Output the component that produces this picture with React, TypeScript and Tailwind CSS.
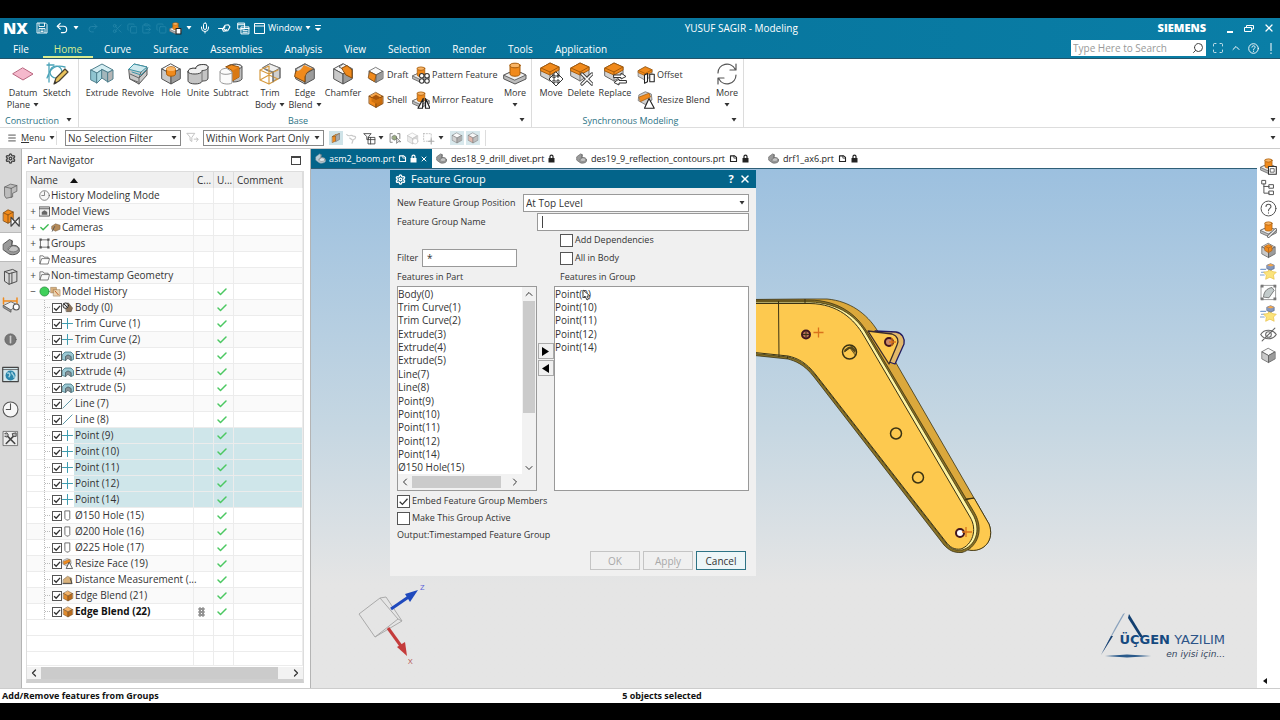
import type { ReactNode } from "react";
import { Mic, Maximize, ChevronUp, ChevronDown, ChevronLeft, ChevronRight, Undo2, Redo2, Scissors, Copy, ClipboardPaste, Search, Settings, Check, Menu as MenuIcon, X } from "lucide-react";

const OR = "#f08a1c";
const GREY = ["#fafafa", "#c9c9c9", "#9b9b9b"];
const ORANGE = ["#f7a548", "#f08a1c", "#c96c0c"];

function Svg({ size = 24, children }: { size?: number; children: ReactNode }) {
  return (
    <svg width={size} height={size} viewBox="0 0 24 24" fill="none" strokeLinejoin="round" strokeLinecap="round" className="shrink-0" aria-hidden="true">
      {children}
    </svg>
  );
}

function Cube({ c = GREY, size = 24, children, stroke = "#555" }: { c?: string[]; size?: number; children?: ReactNode; stroke?: string }) {
  return (
    <Svg size={size}>
      <g stroke={stroke} strokeWidth="1">
        <path d="M12 2 21 7 12 12 3 7Z" fill={c[0]} />
        <path d="M3 7 12 12V22L3 17Z" fill={c[1]} />
        <path d="M21 7 12 12V22L21 17Z" fill={c[2]} />
      </g>
      {children}
    </Svg>
  );
}

function Caret({ className = "" }: { className?: string }) {
  return (
    <svg width="6" height="4" viewBox="0 0 6 4" className={`shrink-0 ${className}`} aria-hidden="true">
      <path d="M.5 0H5.500L3 3.500Z" fill="currentColor" />
    </svg>
  );
}

/* ---------- Ribbon icons ---------- */
const DatumIcon = () => (
  <Svg>
    <path d="M12 6 22 12 12 18 2 12Z" fill="#f5b8cc" stroke="#b9667f" strokeWidth="1" />
  </Svg>
);
const SketchIcon = () => (
  <Svg>
    <path d="M2 3H9M4 1V20M2 16C6 4 12 3 20 5" stroke="#4aa3b8" strokeWidth="1.3" />
    <circle cx="11" cy="10" r="6" stroke="#4aa3b8" strokeWidth="1.2" />
    <path d="M9 22 11 16 20 7 23 10 14 19Z" fill="#e9c35c" stroke="#4b4232" strokeWidth="1.2" />
    <path d="M9 22 10 19 12 21Z" fill="#333" />
  </Svg>
);
const ExtrudeIcon = () => (
  <Svg>
    <g stroke="#4f7f8d" strokeWidth="1">
      <path d="M1 8 12 2 23 8 18 10.500 12 7.500 7 11Z" fill="#d5eef3" />
      <path d="M1 8 7 11V21L1 18Z" fill="#8fc4d0" />
      <path d="M7 11 12 7.500V16L7 21Z" fill="#a9d7e0" />
      <path d="M12 7.500 18 10.500V20L12 16Z" fill="#a3b6bb" />
      <path d="M18 10.500 23 8V17L18 20Z" fill="#b5b5b5" />
    </g>
  </Svg>
);
const ExtrudeSmall = () => (
  <Svg size={12}>
    <path d="M1 9 6 4H18L23 9V19L18 21V13L12 10 7 13V21L1 19Z" fill="#9cc9d4" stroke="#3f7482" strokeWidth="1.600" />
    <path d="M7 21V13L12 10 18 13V21L12 17Z" fill="#8b9599" stroke="#4c5f66" strokeWidth="1.400" />
  </Svg>
);
const RevolveIcon = () => (
  <Svg>
    <path d="M3 7 8 2 21 5 21 13 13 22 4 17Z" fill="#c9c9c9" stroke="#555" />
    <path d="M3 7 8 2 21 5 15 10Z" fill="#cfe9ee" stroke="#3b95a9" />
    <path d="M4 12 13 16 21 8M15 10 13 16V22M4 17 12 20" stroke="#666" />
    <path d="M6 10 15 13 22 6" stroke="#3b95a9" />
  </Svg>
);
const HoleIcon = () => (
  <Cube>
    <path d="M7.500 7C7.500 4 16.500 4 16.500 7V12C16.500 15 7.500 15 7.500 12Z" fill={OR} stroke="#a85c0a" />
    <ellipse cx="12" cy="7" rx="4.500" ry="2" fill="#f9b566" />
  </Cube>
);
const UniteIcon = () => (
  <Svg>
    <path d="M2 10C2 6 7 6 10 6.500C9 2 22 1 22 5V16C22 19 18 19 16 19C16 23 2 23 2 19Z" fill="#c4c4c4" stroke="#444" />
    <path d="M2 10C2 6 7 6 10 6.500C9 2 22 1 22 5C22 8 18 8.500 16 8.500C17 13 2 13 2 10Z" fill="#f0f0f0" stroke="#444" />
    <path d="M16 9V19" stroke="#777" />
  </Svg>
);
const SubtractIcon = () => (
  <Svg>
    <path d="M9 4C13 1 23 2 23 5V17C22 19 18 20 14 20V9Z" fill="#bdbdbd" stroke="#555" />
    <path d="M9 4C13 1 23 2 23 5L20 7 9 5Z" fill="#efefef" stroke="#555" />
    <path d="M7 5 13 8.500V19L20 15V5L13 3Z" fill={OR} stroke="#9c5509" />
    <path d="M13 9 20 5V15L13 19Z" fill="#d97914" />
    <path d="M1 10C1 7 6 6 8 6.500L13 10V21C10 23 1 22 1 19Z" fill="#fbfbfb" stroke="#999" />
    <path d="M1 10C1 13 10 13 13 11" stroke="#999" />
  </Svg>
);
const TrimIcon = () => (
  <Svg>
    <path d="M12 2 22 6V16L15 19V11L8 8 5 6Z" fill="#cfcfcf" stroke="#777" />
    <path d="M12 2 22 6 15 10 5 6Z" fill="#efefef" stroke="#777" />
    <path d="M2 8 11 12V22L2 18ZM2 8 11 4M11 12 20 8M11 22 20 17M2 18 11 13 20 17M11 13V4" stroke="#d69a3e" strokeWidth="1.200" />
    <path d="M15 10V20M22 6V16" stroke="#666" />
  </Svg>
);
const EdgeBlendIcon = () => (
  <Cube>
    <path d="M2 12C3 6 8 8 12 2L21 6.500C17 8 13 10 12 15V20L2 15Z" fill={OR} stroke="#7b470d" />
    <path d="M3 7 12 2 21 6.500C17 7 13 9 12 13L4 9Z" fill="#dcdcdc" stroke="#666" />
    <path d="M4 9C7 9 9 6 11 3L20 7C16 8 13 10 12 14L3 11Z" fill={OR} />
  </Cube>
);
const ChamferIcon = () => (
  <Cube>
    <path d="M12 2 8 5 16 9 21 16V7Z" fill="#f4f4f4" stroke="#666" />
    <path d="M11 6 16 3.500 21 8V16L15 13Z" fill={OR} stroke="#8c4c08" />
  </Cube>
);
const DraftIcon = () => (
  <Cube size={18}>
    <path d="M4 8 12 12 10 21 2 16Z" fill={OR} stroke="#8c4c08" />
  </Cube>
);
const ShellIcon = () => (
  <Cube size={18} c={ORANGE} stroke="#7c430a">
    <path d="M12 5 18 8.500 12 12 6 8.500Z" fill="#a9550a" />
    <path d="M6 9 12 12 18 9V14L12 17 6 14Z" fill="#d0720f" />
  </Cube>
);
const Pad = ({ size = 18, children }: { size?: number; children?: ReactNode }) => (
  <Svg size={size}>
    <path d="M1 13 12 8 23 13V17L12 22 1 17Z" fill="#bcbcbc" stroke="#555" />
    <path d="M1 13 12 8 23 13 12 18Z" fill="#efefef" stroke="#666" />
    <path d="M7 3V12C7 15 17 15 17 12V3Z" fill={OR} stroke="#a85c0a" />
    <ellipse cx="12" cy="3.500" rx="5" ry="2.300" fill="#f9b566" stroke="#a85c0a" />
    {children}
  </Svg>
);
const PatternIcon = () => (
  <Pad>
    <g fill="#fff" stroke="#333" strokeWidth="1.400">
      <circle cx="13" cy="13" r="3" /><circle cx="20" cy="13" r="3" /><circle cx="13" cy="20" r="3" /><circle cx="20" cy="20" r="3" />
    </g>
  </Pad>
);
const MirrorIcon = () => (
  <Pad>
    <path d="M15 10 14 23H8ZM18 10 24 23H18Z" fill="#fff" stroke="#222" strokeWidth="1.600" />
  </Pad>
);
const SyncCube = ({ size = 24, children }: { size?: number; children: ReactNode }) => (
  <Svg size={size}>
    <path d="M2 6 11 1 20 5V13L11 19 2 14Z" fill="#d2d2d2" stroke="#666" />
    <path d="M2 6 11 1 20 5V8L11 13 2 9Z" fill={OR} stroke="#a85c0a" />
    <path d="M2 6 11 10 20 5M11 10V13" stroke="#a85c0a" />
    <path d="M11 13V19" stroke="#777" />
    {children}
  </Svg>
);
const MoveIcon = () => (
  <SyncCube>
    <path d="M17 10 20 13H18V15H20V13L24 17 20 21V18H18V21H20L17 24 14 21H16V18H14V21L10 17 14 13V16H16V13H14Z" fill="#fff" stroke="#222" strokeWidth="0.900" />
  </SyncCube>
);
const DeleteIcon = () => (
  <SyncCube>
    <path d="M13 12 23 22M23 12 13 22" stroke="#333" strokeWidth="3.200" />
    <path d="M13 12 23 22M23 12 13 22" stroke="#fff" strokeWidth="1.600" />
  </SyncCube>
);
const ReplaceIcon = () => (
  <SyncCube>
    <path d="M11 13H18V11L23 14.500 18 17V15.500H11ZM23 18.500H16V17L11 20.500 16 23V21H23Z" fill="#fff" stroke="#333" />
  </SyncCube>
);
const OffsetIcon = () => (
  <SyncCube size={18}>
    <path d="M10 12 14 10V21L10 23ZM17 11H23V21H17Z" fill="#fff" stroke="#222" strokeWidth="1.400" />
  </SyncCube>
);
const ResizeIcon = ({ size = 18 }: { size?: number }) => (
  <Svg size={size}>
    <path d="M3 5 11 1 19 4 20 12 11 18 2 13Z" fill="#cfcfcf" stroke="#666" />
    <path d="M3 8 16 3 18 8 5 14Z" fill={OR} stroke="#a85c0a" />
    <path d="M16 10 23 23H10Z" fill="#fff" stroke="#222" strokeWidth="1.500" />
  </Svg>
);
const CycleIcon = () => (
  <Svg>
    <path d="M3 11A9 9 0 0 1 20 7M21 2V8H15M21 13A9 9 0 0 1 4 17M3 22V16H9" stroke="#555" strokeWidth="1.200" />
  </Svg>
);

/* ---------- Small icons ---------- */
const PartIcon = ({ size = 13, light = false }: { size?: number; light?: boolean }) => (
  <Svg size={size}>
    <path d="M2 8 10 2 14 4 13 10C19 9 23 12 23 15V18C20 23 12 23 9 21L2 16Z" fill={light ? "#b9cdd7" : "#9a9a9a"} stroke={light ? "#7f97a3" : "#555"} strokeWidth="1.300" />
    <ellipse cx="15" cy="14.500" rx="7" ry="4" fill={light ? "#dfe9ee" : "#c4c4c4"} stroke="#666" />
    <path d="M9 15 13 10V3" stroke="#555" />
  </Svg>
);
const StarIcon = () => (
  <Svg size={17}>
    <path d="M1 9H8M2 13H7M0 17H6" stroke="#7da0d0" strokeWidth="1.500" />
    <path d="M14 6 17 12 23 13 19 17 20 23 14 20 8 23 9 17 5 13 11 12Z" fill="#fbe37a" stroke="#e8c14a" />
    <path d="M10 3 15 1 20 3V8L15 10 10 8Z" fill="#8497bd" stroke="#56678c" />
    <path d="M10 3 15 1 20 3 15 5Z" fill="#f3a54a" />
  </Svg>
);
const ClockIcon = ({ size = 12 }: { size?: number }) => (
  <Svg size={size}>
    <circle cx="12" cy="12" r="10.500" stroke="#555" strokeWidth="1.500" fill="#f7f7f7" />
    <path d="M12 4V12H6" stroke="#555" strokeWidth="1.500" />
  </Svg>
);
const PageIcon = () => (
  <Svg size={9}>
    <path d="M4 5H15L20 9V20H4Z" stroke="currentColor" strokeWidth="3" />
    <path d="M13 5V11H20" stroke="currentColor" strokeWidth="2" />
  </Svg>
);
const LockIcon = () => (
  <svg width="7" height="9" viewBox="0 0 7 9" className="shrink-0" aria-hidden="true">
    <path d="M2 4V2.500C2 .7 5 .7 5 2.500V4" fill="none" stroke="currentColor" strokeWidth="1.200" />
    <path d="M.5 4H6.500V8.500H.5Z" fill="currentColor" />
  </svg>
);

/* ---------- Ribbon ---------- */
function BigButton({ icon, label, second, width, caret }: { icon: ReactNode; label: string; second?: string; width: string; caret?: boolean }) {
  return (
    <button className={`flex ${width} shrink-0 flex-col items-center text-[9px] leading-3 whitespace-nowrap`}>
      <span className="mb-px flex h-6 items-center">{icon}</span>
      <span>{label}</span>
      {(second || caret) && (
        <span className="flex h-3 items-center gap-[3px]">
          {second}
          <Caret />
        </span>
      )}
    </button>
  );
}
function SmallButton({ icon, label }: { icon: ReactNode; label: string }) {
  return (
    <button className="flex h-[25px] items-center gap-[2px] text-[9px] leading-3 whitespace-nowrap">
      {icon}
      {label}
    </button>
  );
}
function Group({ title, children }: { title: string; children: ReactNode }) {
  return (
    <section className="relative flex shrink-0 flex-col border-r border-[#dcdcdc] pt-[3px]">
      <div className="flex h-[53px] items-start">{children}</div>
      <h2 className="pr-[14px] text-center text-[9px] leading-3 text-[#2d7385]">{title}</h2>
      <Caret className="absolute right-[6px] bottom-[5px]" />
    </section>
  );
}

/* ---------- Tree ---------- */
type Row = { label: string; icon: ReactNode; top?: boolean; sign?: string; tick?: boolean; sel?: boolean; bold?: boolean };
const plus = (
  <Svg size={11}>
    <path d="M12 1V23M1 12H23" stroke="#3f9db0" strokeWidth="2.200" />
  </Svg>
);
const lineIcon = (
  <Svg size={11}>
    <path d="M2 22 22 2" stroke="#4f8d9c" strokeWidth="2" />
  </Svg>
);
const holeIcon = (
  <Svg size={11}>
    <path d="M7 2H17V19L14 22H10L7 19Z" stroke="#555" strokeWidth="1.800" fill="#fff" />
  </Svg>
);
const folder = (
  <Svg size={11}>
    <path d="M2 21V4H9L11 7H20V10M2 21 6 10H23L20 21Z" stroke="#555" strokeWidth="1.600" />
  </Svg>
);
const blendSmall = <Cube size={12} c={["#f3b36a", "#e08b2e", "#b96b1c"]} stroke="#6b4a26" />;
const rows: Row[] = [
  { label: "History Modeling Mode", top: true, icon: <ClockIcon size={11} /> },
  {
    label: "Model Views", top: true, sign: "+",
    icon: <Svg size={11}><path d="M1 2H23V22H1ZM1 6H23" stroke="#444" strokeWidth="1.800" fill="#eee" /><path d="M6 19V13L12 9 18 13V19Z" fill="#666" /></Svg>,
  },
  {
    label: "Cameras", top: true, sign: "+",
    icon: <><Check size={11} strokeWidth={3} className="text-[#3cbb50]" aria-hidden="true" /><Svg size={11}><path d="M4 9 12 4 22 7V16L12 20 4 16Z" fill="#b58a58" stroke="#69553d" /><path d="M5 20 10 10" stroke="#555" strokeWidth="2" /></Svg></>,
  },
  {
    label: "Groups", top: true, sign: "+",
    icon: <Svg size={11}><path d="M4 4H20V20H4Z" stroke="#444" strokeWidth="1.600" /><path d="M1 1H6V6H1ZM18 1H23V6H18ZM1 18H6V23H1ZM18 18H23V23H18Z" fill="#555" /></Svg>,
  },
  { label: "Measures", top: true, sign: "+", icon: folder },
  { label: "Non-timestamp Geometry", top: true, sign: "+", icon: folder },
  {
    label: "Model History", top: true, sign: "−", tick: true,
    icon: <><Svg size={11}><circle cx="12" cy="12" r="10" fill="#3fd05a" stroke="#28833a" strokeWidth="1.500" /></Svg><Svg size={11}><path d="M2 3H14V15H2Z" fill="#d8b07c" stroke="#85643c" /><path d="M8 8H22V22H8Z" fill="#ead3ae" stroke="#85643c" /><path d="M11 11 18 19" stroke="#c05a20" strokeWidth="2" /></Svg></>,
  },
  { label: "Body (0)", tick: true, icon: <Svg size={11}><path d="M6 4 14 2 23 13 20 21 10 21Z" fill="#8d745b" stroke="#3c342b" /><circle cx="8" cy="8" r="6" stroke="#222" strokeWidth="2" fill="#ddd" /><path d="M4 4 12 12" stroke="#222" strokeWidth="2" /></Svg> },
  { label: "Trim Curve (1)", tick: true, icon: plus },
  { label: "Trim Curve (2)", tick: true, icon: plus },
  { label: "Extrude (3)", tick: true, icon: <ExtrudeSmall /> },
  { label: "Extrude (4)", tick: true, icon: <ExtrudeSmall /> },
  { label: "Extrude (5)", tick: true, icon: <ExtrudeSmall /> },
  { label: "Line (7)", tick: true, icon: lineIcon },
  { label: "Line (8)", tick: true, icon: lineIcon },
  { label: "Point (9)", tick: true, sel: true, icon: plus },
  { label: "Point (10)", tick: true, sel: true, icon: plus },
  { label: "Point (11)", tick: true, sel: true, icon: plus },
  { label: "Point (12)", tick: true, sel: true, icon: plus },
  { label: "Point (14)", tick: true, sel: true, icon: plus },
  { label: "Ø150 Hole (15)", tick: true, icon: holeIcon },
  { label: "Ø200 Hole (16)", tick: true, icon: holeIcon },
  { label: "Ø225 Hole (17)", tick: true, icon: holeIcon },
  { label: "Resize Face (19)", tick: true, icon: <ResizeIcon size={11} /> },
  { label: "Distance Measurement (...", tick: true, icon: <Svg size={11}><path d="M3 12 12 5 21 9V20H3Z" fill="#d9b27c" stroke="#66513a" /><path d="M2 21H22L18 10" stroke="#333" strokeWidth="1.800" /></Svg> },
  { label: "Edge Blend (21)", tick: true, icon: blendSmall },
  { label: "Edge Blend (22)", tick: true, bold: true, icon: blendSmall },
];

function CheckBox({ id, checked = false, small = false, label }: { id: string; checked?: boolean; small?: boolean; label?: string }) {
  return (
    <span className={`grid shrink-0 ${small ? "size-[10px]" : "size-[13px]"}`}>
      <input id={id} type="checkbox" defaultChecked={checked} aria-label={label} className="peer size-full appearance-none border border-[#555] bg-white [grid-area:1/1]" />
      <svg viewBox="0 0 12 12" className="pointer-events-none invisible size-full [grid-area:1/1] peer-checked:visible" aria-hidden="true">
        <path d="M2.500 6.200 5 8.700 9.700 3.500" fill="none" stroke="#333" strokeWidth={small ? 1.600 : 1.200} />
      </svg>
    </span>
  );
}

function PartNavigator() {
  return (
    <aside className="flex w-[290px] shrink-0 flex-col border-x border-[#b4b4b4] bg-white pr-[6px] pb-[5px] pl-1">
      <div className="flex h-[22px] shrink-0 items-center justify-between pr-[3px] pl-px">
        <h2 className="text-[10px]">Part Navigator</h2>
        <button aria-label="Undock panel" className="h-[9px] w-[10px] border border-t-2 border-[#444]" />
      </div>
      <div className="flex flex-1 flex-col border border-b-4 border-[#ddd] border-b-[#cfcfcf]">
        <table className="w-full table-fixed border-separate border-spacing-0 text-[10px]">
          <colgroup>
            <col />
            <col className="w-5" />
            <col className="w-5" />
            <col className="w-[69px]" />
          </colgroup>
          <thead>
            <tr className="h-4 bg-[#f0f0f0] text-left leading-[15px] [&>th]:border-r [&>th]:border-[#ddd] [&>th]:p-0 [&>th]:pl-[3px] [&>th]:font-normal">
              <th>
                <span className="flex items-center gap-3">
                  Name
                  <svg width="8" height="5" viewBox="0 0 8 5" aria-hidden="true"><path d="M0 5 4 0 8 5Z" fill="#111" /></svg>
                </span>
              </th>
              <th>C...</th>
              <th>U...</th>
              <th>Comment</th>
            </tr>
          </thead>
          <tbody>
            {rows.map((r, i) => (
              <tr key={r.label} className={`h-4 leading-[15px] [&>td]:border-r [&>td]:border-b [&>td]:border-[#ececec] [&>td]:p-0 ${r.sel ? "[&>td+td]:bg-[#cfe6ea]" : i % 2 ? "bg-[#fafafa]" : ""}`}>
                <td>
                  <span className="flex items-center whitespace-nowrap">
                    {r.top ? (
                      <span className="flex w-3 shrink-0 justify-center text-[#444]">{r.sign}</span>
                    ) : (
                      <>
                        <span className="h-[15px] w-[18px] shrink-0 border-r border-dotted border-[#bbb]" />
                        <span className="mr-[2px] w-[5px] shrink-0 border-t border-dotted border-[#bbb]" />
                        <CheckBox small id={`row-${i}`} checked label={`Show ${r.label}`} />
                      </>
                    )}
                    <span className={`flex shrink-0 items-center ${r.top ? "" : "w-3"}`}>{r.icon}</span>
                    <span className={`h-[15px] flex-1 pl-px ${r.sel ? "bg-[#cfe6ea]" : ""} ${r.bold ? "font-bold text-[#111]" : ""}`}>{r.label}</span>
                  </span>
                </td>
                <td>
                  {r.bold && (
                    <svg width="7" height="10" viewBox="0 0 7 10" className="ml-1" aria-hidden="true">
                      <path d="M1 1H3V3H1ZM4 1H6V3H4ZM1 4H3V6H1ZM4 4H6V6H4ZM1 7H3V9H1ZM4 7H6V9H4Z" fill="none" stroke="#555" strokeWidth=".8" />
                    </svg>
                  )}
                </td>
                <td>{r.tick && <Check size={12} strokeWidth={3} className="ml-[2px] text-[#4cc862]" aria-label="Up to date" />}</td>
                <td />
              </tr>
            ))}
            {["h-4", "h-4", "h-[14px]"].map((h, n) => (
              <tr key={n} className={`${h} [&>td]:border-r [&>td]:border-b [&>td]:border-[#ececec] [&>td]:p-0`}>
                <td /><td /><td /><td />
              </tr>
            ))}
          </tbody>
        </table>
        <div className="mt-auto flex h-[12px] items-center justify-between bg-[#f2f2f2] px-[1px]">
          <ChevronLeft size={12} strokeWidth={2.500} aria-hidden="true" />
          <div className="mr-3 ml-px h-full flex-1 bg-[#cbcbcb]" />
          <ChevronRight size={12} strokeWidth={2.500} aria-hidden="true" />
        </div>
      </div>
    </aside>
  );
}

/* ---------- Dialog ---------- */
const inPart = ["Body(0)", "Trim Curve(1)", "Trim Curve(2)", "Extrude(3)", "Extrude(4)", "Extrude(5)", "Line(7)", "Line(8)", "Point(9)", "Point(10)", "Point(11)", "Point(12)", "Point(14)", "Ø150 Hole(15)"];
const inGroup = ["Point(9)", "Point(10)", "Point(11)", "Point(12)", "Point(14)"];
const listClass = "grid h-[187px] flex-1 grid-rows-[repeat(14,1fr)] items-center text-[10px] leading-3";

function FeatureGroupDialog() {
  return (
    <div role="dialog" aria-labelledby="dlg-title" className="absolute top-[1px] left-[79px] flex w-[366px] flex-col bg-[#f0f0f0] pb-[6px] text-[9px] leading-3 text-[#333]">
      <div className="flex h-[18px] shrink-0 items-center bg-[#03648a] pr-[5px] pl-[5px] text-white">
        <Settings size={11} strokeWidth={3} aria-hidden="true" />
        <h2 id="dlg-title" className="ml-[5px] flex-1 text-[11px]">Feature Group</h2>
        <button className="w-4 text-[11px] font-bold" aria-label="Help">?</button>
        <button aria-label="Close"><X size={12} strokeWidth={3} /></button>
      </div>
      <div className="flex flex-1 flex-col px-[7px] pt-[6px]">
        <div className="flex h-[18px] items-center justify-between">
          <label htmlFor="pos" className="whitespace-nowrap">New Feature Group Position</label>
          <span className="relative flex h-full w-[226px] shrink-0 items-center">
            <select id="pos" className="size-full appearance-none border border-[#999] bg-white pl-[2px] text-[10px]">
              <option>At Top Level</option>
            </select>
            <Caret className="absolute right-1" />
          </span>
        </div>
        <div className="mt-px flex h-[18px] items-center justify-between">
          <label htmlFor="gname">Feature Group Name</label>
          <span className="relative flex h-full w-[212px] items-center">
            <input id="gname" className="size-full border border-[#999] bg-white px-1 text-[10px]" />
            <span className="absolute left-[5px] h-3 w-px bg-[#444]" />
          </span>
        </div>
        <div className="mt-[2px] flex h-[14px] items-center gap-[2px] pl-[163px]">
          <CheckBox id="deps" />
          <label htmlFor="deps">Add Dependencies</label>
        </div>
        <div className="mt-[2px] flex h-[18px] items-center">
          <label htmlFor="filter" className="w-[25px]">Filter</label>
          <input id="filter" defaultValue="*" className="h-full w-[95px] border border-[#999] bg-white px-1 text-[10px]" />
          <span className="ml-[43px] flex items-center gap-[2px]">
            <CheckBox id="allbody" />
            <label htmlFor="allbody">All in Body</label>
          </span>
        </div>
        <div className="mt-[2px] mb-px flex h-4 items-center">
          <h3 className="w-[163px]">Features in Part</h3>
          <h3>Features in Group</h3>
        </div>
        <div className="flex h-[205px]">
          <div className="flex w-[140px] flex-col border border-[#999] bg-white">
            <div className="flex">
              <ul className={listClass}>{inPart.map((t) => <li key={t}>{t}</li>)}</ul>
              <div className="flex w-[14px] flex-col items-center bg-[#f2f2f2]">
                <ChevronUp size={12} className="my-[1px]" aria-hidden="true" />
                <div className="h-[112px] w-3 bg-[#cbcbcb]" />
                <ChevronDown size={12} className="mt-auto" aria-hidden="true" />
              </div>
            </div>
            <div className="flex flex-1 items-center bg-[#f2f2f2] pr-[15px] pl-[1px]">
              <ChevronLeft size={12} aria-hidden="true" />
              <div className="mr-2 ml-px h-3 flex-1 bg-[#cbcbcb]" />
              <ChevronRight size={12} aria-hidden="true" />
            </div>
          </div>
          <div className="flex w-[17px] flex-col items-center gap-px pt-[57px]">
            <button aria-label="Add to group" className="flex size-4 items-center justify-center border border-[#aaa]">
              <svg width="7" height="9" viewBox="0 0 7 9" aria-hidden="true"><path d="M0 0 7 4.500 0 9Z" fill="#000" /></svg>
            </button>
            <button aria-label="Remove from group" className="flex size-4 items-center justify-center border border-[#aaa]">
              <svg width="7" height="9" viewBox="0 0 7 9" aria-hidden="true"><path d="M7 0 0 4.500 7 9Z" fill="#000" /></svg>
            </button>
          </div>
          <div className="relative flex flex-1 items-start border border-[#999] bg-white">
            <ul className={listClass}>{inGroup.map((t) => <li key={t}>{t}</li>)}</ul>
            <svg width="9" height="12" viewBox="0 0 9 12" className="absolute top-[2px] left-[27px]" aria-hidden="true">
              <path d="M1 1V9L3 7 5 11 6.500 10 5 7H8Z" fill="#fff" stroke="#444" />
            </svg>
          </div>
        </div>
        <div className="mt-[3px] flex h-[14px] items-center gap-[2px]">
          <CheckBox id="embed" checked />
          <label htmlFor="embed">Embed Feature Group Members</label>
        </div>
        <div className="mt-[3px] flex h-[14px] items-center gap-[2px]">
          <CheckBox id="active" />
          <label htmlFor="active">Make This Group Active</label>
        </div>
        <p className="mt-1">Output:Timestamped Feature Group</p>
        <div className="mt-[10px] flex justify-end gap-[3px] pr-[3px] text-[10px]">
          <button disabled className="h-[19px] w-[50px] border border-[#c4c4c4] text-[#a8a8a8]">OK</button>
          <button disabled className="h-[19px] w-[50px] border border-[#c4c4c4] text-[#a8a8a8]">Apply</button>
          <button className="h-[19px] w-[50px] border border-[#2d7385] bg-[#edf6f8]">Cancel</button>
        </div>
      </div>
    </div>
  );
}

/* ---------- Model view ---------- */
function Boom() {
  return (
    <svg width="260" height="280" viewBox="750 280 260 280" className="absolute top-[111px] left-[439px]" fill="none" stroke="#3a3213" strokeLinejoin="round" aria-label="Boom model">
      <path d="M750 299.500 805 299 827 299C850 301 867 314 877 330L974 498 989 524C995 540 984 552 970 550L960 540 868 340Z" fill="#dba83c" strokeWidth=".8" />
      <path d="M965 499 974 498 989 524C995 540 984 553 968 550L961 535Z" fill="#fdc94f" strokeWidth=".9" />
      <path d="M750 300 808 300C842 300 860 318 870 337L974 512C986 532 975 549 962 552.500C953 553 949 550 944 545L814 377C804 364 795 361 788 359L750 355Z" fill="#8a7226" strokeWidth=".8" />
      <path d="M750 302 810 302C840 303 858 318 867 335L972 513C983 531 974 547 962 550C954 551 950 548 946 543L816 376C806 363 797 359 788 357L750 353Z" fill="#fff4a0" strokeWidth=".8" />
      <path d="M750 303.500 810 303.500C838 304 854 319 864 336L970 517C978 530 972 545 961 549C954 550 950 547 946 542L816 375C806 362 797 358 788 356L750 352Z" fill="#fdc94f" strokeWidth="1" />
      <path d="M805 299V303M778.500 301 779 357M788 356 787 359" strokeWidth="1" />
      <path d="M964.500 500 974 498" strokeWidth="1.200" />
      <g stroke="#221b5e" strokeWidth="1.300">
        <path d="M875 331 896 332C902 333 905 338 904 344L895 364 889 362Z" fill="#e3b96a" />
        <path d="M868 331 892 334C898 336 899 341 897 345L889 364Z" fill="#fdc94f" stroke="#3a2d2d" />
      </g>
      <path d="M844 350 848 347 852 346 856 350 855 353 850 348 845 352Z" fill="#5a4a1a" stroke="none" />
      <circle cx="849.500" cy="352" r="7" strokeWidth="1.500" />
      <path d="M844 352 850 348 856 356" strokeWidth=".8" />
      <circle cx="896" cy="433.500" r="5.500" strokeWidth="1.500" />
      <circle cx="918" cy="477.500" r="5.500" strokeWidth="1.500" />
      <g stroke="#40151f" strokeWidth="2">
        <circle cx="806" cy="334.500" r="4" fill="#b87058" />
        <circle cx="889" cy="342" r="4" fill="#c98a6a" />
        <circle cx="960" cy="533" r="4" fill="#fff" />
      </g>
      <path d="M803 334.500H809M806 331.500V337.500" strokeWidth="1" />
      <path d="M813.500 332.500H823.500M818.500 327.500V337.500M889 342H896M892 338V346M962 532H972M966 527V537" stroke="#d9731c" strokeWidth="1.300" />
    </svg>
  );
}
function Triad() {
  return (
    <svg width="80" height="90" viewBox="350 580 80 90" className="absolute top-[411px] left-[39px]" fill="none" aria-label="View axes">
      <path d="M359 614 380 598 398 619 375 637ZM380 598 386 597 402 621 398 619M402 621 375 637" stroke="#aaa" />
      <path d="M391 609 410 596" stroke="#1f49bd" strokeWidth="3" />
      <path d="M405 594 418 590 410 602Z" fill="#1f49bd" />
      <path d="M388 628 401 646" stroke="#c43c3c" strokeWidth="3" />
      <path d="M397 647 407 656 405 642Z" fill="#c43c3c" />
      <text x="420" y="590" fontSize="8" fill="#5a62d8">Z</text>
      <text x="408" y="664" fontSize="8" fill="#b34c4c">X</text>
    </svg>
  );
}
function Brand() {
  return (
    <div className="absolute right-8 bottom-[30px] h-[46px] w-[124px] font-['DejaVu_Sans',sans-serif] text-[#2d5488]">
      <svg width="60" height="46" viewBox="0 0 60 46" className="absolute top-0 left-0" aria-hidden="true">
        <path d="M24 1 3 38 1 41 14 16 22 2Z" fill="#8aa2bd" />
        <path d="M0 43 10 24 12 24Z" fill="#153f70" />
        <path d="M28 2 42 25 39 25 27 6Z" fill="#123f70" />
        <path d="M4 44 26 42.500 50 44 26 45.500Z" fill="#2a5a8b" />
      </svg>
      <p className="absolute top-[20px] right-0 text-[13px] leading-[15px] whitespace-nowrap"><b className="text-[#164a80]">ÜÇGEN</b> YAZILIM</p>
      <p className="absolute right-0 -bottom-[2px] text-[9px] leading-[11px] whitespace-nowrap text-[#34465e] italic">en iyisi için...</p>
    </div>
  );
}

const menuTabs = ["File", "Home", "Curve", "Surface", "Assemblies", "Analysis", "View", "Selection", "Render", "Tools", "Application"];

export default function App() {
  return (
    <div className="flex min-h-screen flex-col overflow-hidden bg-black pt-[18px] pb-[17px] font-['Open_Sans','Noto_Sans',sans-serif] text-[10px] text-[#333]">
      {/* Title bar */}
      <header className="shrink-0 border-b border-[#23546a] bg-linear-to-r from-[#066e96] to-[#0a7ea6] text-white">
        <div className="grid h-5 grid-cols-[10fr_auto_7fr] items-center pr-[5px] pl-[3px]">
          <div className="flex items-center">
            <b className="w-[33px] text-[16px] leading-5 font-extrabold">NX</b>
            <button aria-label="Save">
              <svg width="12" height="12" viewBox="0 0 24 24" fill="none" stroke="#fff" strokeWidth="1.800" aria-hidden="true"><path d="M2 2H19L22 5V22H2ZM6 2V9H17V2M6 22V13H18V22M9 16H15M9 19H15" /></svg>
            </button>
            <button aria-label="Undo" className="ml-[7px]"><Undo2 size={14} /></button>
            <Caret className="mx-1" />
            <span className="flex w-[84px] items-center gap-1 pl-1 text-[#2384a8]">
              <Redo2 size={12} /><span className="w-[5px]" /><Scissors size={11} /><Copy size={11} /><ClipboardPaste size={11} /><Copy size={11} />
            </span>
            <button aria-label="Repeat command" className="ml-[2px]"><Pad size={13}><path d="M13 12H22V22H13Z" fill="#fff" stroke="#222" strokeWidth="2" /></Pad></button>
            <Caret className="mx-1" />
            <button aria-label="Voice" className="ml-[3px]"><Mic size={12} /></button>
            <button aria-label="Touch" className="ml-[7px]">
              <Svg size={13}><path d="M1 12H9L13 6 19 5 22 9 18 16 10 17 8 13M13 9A3 3 0 1 0 16 14" stroke="#fff" strokeWidth="2" /></Svg>
            </button>
            <button aria-label="Switch window" className="ml-[6px]">
              <Svg size={13}><path d="M2 2H14V13H2ZM2 5H14M8 9H22V22H8ZM8 12H22M11 16H19M11 19H19" stroke="#fff" strokeWidth="1.800" /></Svg>
            </button>
            <button className="ml-[4px] flex items-center gap-[3px] text-[9px] leading-4">
              <svg width="11" height="11" viewBox="0 0 11 11" fill="none" stroke="#fff" aria-hidden="true"><path d="M.5 .5H10.500V10.500H.5ZM.5 3H10.500" /></svg>
              Window <Caret />
            </button>
            <svg width="6" height="7" viewBox="0 0 6 7" className="ml-[4px]" aria-hidden="true"><path d="M0 0H6V1H0ZM0 3H6L3 6Z" fill="#fff" /></svg>
          </div>
          <h1 className="text-[10px]">YUSUF SAGIR - Modeling</h1>
          <div className="flex items-center justify-end">
            <b className="text-[11px] font-extrabold">SIEMENS</b>
            <button aria-label="Minimize" className="mt-2 ml-[21px] h-[2px] w-[6px] bg-white" />
            <button aria-label="Restore" className="ml-[11px]">
              <svg width="10" height="9" viewBox="0 0 10 9" fill="none" stroke="#fff" aria-hidden="true"><path d="M2.500 3V1.500H9.500V5H7.500M.5 3.500H7.500V7.500H.5Z" /></svg>
            </button>
            <button aria-label="Close window" className="ml-[9px]"><X size={12} strokeWidth={2.500} /></button>
          </div>
        </div>
        <div className="flex h-[20px] items-center justify-between pr-[5px]">
          <nav className="flex h-full pl-[2px]">
            {menuTabs.map((t) => (
              <a key={t} href="#" className={`flex h-full items-center border-b-2 px-[11px] pt-[3px] leading-4 ${t === "Home" ? "ml-[3px] border-[#d9ec8f] text-[#d9ec8f]" : "border-transparent"}`}>{t}</a>
            ))}
          </nav>
          <div className="flex items-center gap-[6px]">
            <span className="flex h-4 w-[135px] items-center bg-white pr-[2px] text-[#444]">
              <input type="search" aria-label="Search" placeholder="Type Here to Search" className="min-w-0 flex-1 pl-[2px] text-[10px] placeholder:text-[#999]" />
              <Search size={12} className="-scale-x-100" aria-hidden="true" />
            </span>
            <Maximize size={12} strokeWidth={1.500} aria-label="Full screen" />
            <ChevronUp size={12} aria-label="Collapse ribbon" />
            <Svg size={11}><circle cx="12" cy="12" r="10.500" stroke="#fff" strokeWidth="2" /><path d="M8.500 9C8.500 5 15.500 5 15.500 9C15.500 12 12 11.500 12 15M12 18V18.500" stroke="#fff" strokeWidth="2" /></Svg>
            <svg width="10" height="11" viewBox="0 0 10 11" aria-hidden="true"><path d="M6 0V8M6 9.500V11" stroke="#fff" /></svg>
          </div>
        </div>
      </header>

      {/* Ribbon */}
      <div className="relative flex h-[69px] shrink-0 border-b border-[#ddd] bg-white text-[#333]">
        <Group title="Construction">
          <div className="flex pr-[6px] pl-1">
            <BigButton icon={<DatumIcon />} label="Datum" second="Plane" width="w-[38px]" />
            <BigButton icon={<SketchIcon />} label="Sketch" width="w-[30px]" />
          </div>
        </Group>
        <Group title="Base">
          <div className="flex pr-px pl-[5px]">
            <BigButton icon={<ExtrudeIcon />} label="Extrude" width="w-9" />
            <BigButton icon={<RevolveIcon />} label="Revolve" width="w-9" />
            <BigButton icon={<HoleIcon />} label="Hole" width="w-[30px]" />
            <BigButton icon={<UniteIcon />} label="Unite" width="w-6" />
            <BigButton icon={<SubtractIcon />} label="Subtract" width="w-[42px]" />
            <BigButton icon={<TrimIcon />} label="Trim" second="Body" width="w-9" />
            <BigButton icon={<EdgeBlendIcon />} label="Edge" second="Blend" width="w-[34px]" />
            <BigButton icon={<ChamferIcon />} label="Chamfer" width="w-[42px]" />
            <div className="w-[46px] pl-[3px]">
              <SmallButton icon={<DraftIcon />} label="Draft" />
              <SmallButton icon={<ShellIcon />} label="Shell" />
            </div>
            <div className="w-[90px] pl-[2px]">
              <SmallButton icon={<PatternIcon />} label="Pattern Feature" />
              <SmallButton icon={<MirrorIcon />} label="Mirror Feature" />
            </div>
            <BigButton icon={<Pad size={24} />} label="More" width="w-[30px]" caret />
          </div>
        </Group>
        <Group title="Synchronous Modeling">
          <div className="flex pl-1">
            <BigButton icon={<MoveIcon />} label="Move" width="w-[30px]" />
            <BigButton icon={<DeleteIcon />} label="Delete" width="w-[30px]" />
            <BigButton icon={<ReplaceIcon />} label="Replace" width="w-[38px]" />
            <div className="w-[77px] pl-[3px]">
              <SmallButton icon={<OffsetIcon />} label="Offset" />
              <SmallButton icon={<ResizeIcon />} label="Resize Blend" />
            </div>
            <BigButton icon={<CycleIcon />} label="More" width="w-8" caret />
          </div>
        </Group>
        <Caret className="absolute right-1 bottom-[5px]" />
      </div>

      {/* Selection bar */}
      <div className="flex h-[21px] shrink-0 items-center border-b border-[#ccc] bg-white text-[#333]">
        <button className="flex w-[57px] items-center gap-1 border-r border-[#ddd] pl-[7px]">
          <MenuIcon size={10} aria-hidden="true" />
          <span className="text-[9px]"><u>M</u>enu</span>
          <Caret />
        </button>
        <span className="relative ml-2 flex h-4 w-[116px] items-center">
          <select aria-label="Selection filter" className="size-full appearance-none border border-[#888] pl-[2px] leading-3"><option>No Selection Filter</option></select>
          <Caret className="absolute right-1" />
        </span>
        <span className="ml-[5px]"><Svg size={14}><path d="M2 4H15L10 11V18L7 16V11Z M14 14H20M18 12 21 14 18 18" stroke="#bbb" strokeWidth="1.500" /></Svg></span>
        <span className="relative ml-[3px] flex h-4 w-[121px] items-center">
          <select aria-label="Selection scope" className="size-full appearance-none border border-[#888] pl-[2px] leading-3"><option>Within Work Part Only</option></select>
          <Caret className="absolute right-1" />
        </span>
        <div className="ml-[5px] flex items-center">
          <span className="flex size-[14px] items-center justify-center bg-[#cfe3e8]"><Svg size={12}><path d="M5 9 12 5V18L5 21Z" fill={OR} stroke="#875016" /><path d="M5 9 12 5 19 3 13 8Z" fill="#f9b566" stroke="#875016" /><path d="M12 7 19 3V15L12 19Z" fill="#aaa" stroke="#666" /></Svg></span>
          <span className="ml-[2px] opacity-40"><Svg size={14}><path d="M3 6C8 12 10 4 14 9C20 8 19 14 14 15L12 21M8 12 12 15" stroke="#777" strokeWidth="2" /></Svg></span>
          <span className="ml-[4px]"><Svg size={13}><path d="M2 3H15L10 9V14H7V9ZM10 10H22V22H10ZM10 14H22M14 10V22" stroke="#444" strokeWidth="1.600" /></Svg></span>
          <Caret className="mx-[2px]" />
          <span className="ml-[3px]"><Svg size={13}><path d="M6 3H2V19H6M16 3H20V12" stroke="#777" strokeWidth="1.600" /><path d="M6 8 10 6 14 8V13L10 15 6 13Z" fill="#9cae84" stroke="#555" /><path d="M14 11V21L17 18H21Z" fill="#ddd" stroke="#444" /></Svg></span>
          <span className="ml-1 opacity-40"><Cube size={13}><circle cx="17" cy="17" r="5" fill="#fff" stroke="#555" /></Cube></span>
          <span className="ml-[3px] opacity-50"><Svg size={13}><path d="M3 3H17V17H3Z" stroke="#777" strokeDasharray="2 3" strokeWidth="1.500" /><path d="M17 12V22M12 17H22" stroke="#555" strokeWidth="2" /></Svg></span>
          <Caret className="mx-[3px]" />
          <span className="ml-[3px] flex size-[14px] items-center justify-center bg-[#cfe3e8] opacity-80"><Cube size={12} /></span>
          <span className="ml-[2px] flex size-[14px] items-center justify-center bg-[#cfe3e8] opacity-80"><Cube size={12} c={["#f3f3f3", "#d9a89b", "#b0b0b0"]} /></span>
          <span className="ml-[5px] h-4 w-px bg-[#ddd]" />
        </div>
        <Caret className="mr-1 ml-auto" />
      </div>

      {/* Workspace */}
      <main className="flex flex-1">
        <nav aria-label="Resource bar" className="flex w-[21px] shrink-0 flex-col bg-[#d9d9d9] text-[#444]">
          <button aria-label="Settings" className="mb-[9px] flex h-[18px] items-center justify-center"><Settings size={11} strokeWidth={3} /></button>
          <button aria-label="Assembly navigator" className="flex h-7 items-center justify-center"><Svg size={17}><path d="M4 7 12 3 21 5V13L15 16V21L6 23 4 20Z" fill="#bdbdbd" stroke="#555" /><path d="M4 7 13 9 21 5M13 9V22" stroke="#555" /></Svg></button>
          <button aria-label="Constraint navigator" className="flex h-7 items-center justify-center"><Svg size={18}><path d="M2 5 8 1 15 4V15L8 19 2 16Z" fill={OR} stroke="#7a4710" /><path d="M2 5 8 8 15 4M8 8V19" stroke="#7a4710" /><path d="M12 11V23L23 11V23Z" fill="#fff" stroke="#444" strokeWidth="1.500" /></Svg></button>
          <button aria-label="Part navigator" className="flex h-[30px] items-center justify-center border-y border-[#bbb] bg-white"><PartIcon size={18} /></button>
          <button aria-label="Reuse library" className="flex h-7 items-center justify-center"><Svg size={17}><path d="M4 5 15 2 21 5V19L10 23 4 19Z" fill="#d6d6d6" stroke="#444" strokeWidth="1.300" /><path d="M4 5 10 8V23M10 8 21 5M14 7V21" stroke="#444" strokeWidth="1.300" /></Svg></button>
          <button aria-label="View manager" className="mb-1 flex h-7 items-center justify-center"><Svg size={18}><path d="M2 4V12M2 8H20M20 4V11" stroke={OR} strokeWidth="2" /><path d="M2 14 12 9 20 13 12 20Z" fill="#eee" stroke="#555" /><path d="M2 14 12 20V23L2 17Z" fill="#999" stroke="#555" /><circle cx="19" cy="16" r="4" fill="#fff" stroke="#555" strokeWidth="1.500" /></Svg></button>
          <button aria-label="Information" className="flex h-[35px] items-center justify-center"><Svg size={13}><circle cx="12" cy="12" r="10.500" fill="#777" stroke="#555" /><path d="M12 6V18" stroke="#ccc" strokeWidth="3" /></Svg></button>
          <button aria-label="Web browser" className="flex h-[35px] items-center justify-center"><Svg size={17}><path d="M1 2H23V22H1Z" fill="#d4e7ec" stroke="#444" strokeWidth="1.600" /><path d="M1 5H23" stroke="#444" /><circle cx="12" cy="13.500" r="7" fill="#2b86ab" /><path d="M8 10C11 9 12 13 10 15M14 9C13 12 18 12 17 16" stroke="#a9d7e4" strokeWidth="2" /></Svg></button>
          <button aria-label="History" className="flex h-[35px] items-center justify-center"><ClockIcon size={17} /></button>
          <button aria-label="Roles" className="flex h-[22px] items-center justify-center"><Svg size={17}><path d="M2 2H22V22H2Z" stroke="#555" fill="#eee" /><path d="M7 8 18 19M17 8 6 19" stroke="#444" strokeWidth="2.200" /><path d="M4 5 7 4 9 7 7 10 4 9M15 5 20 4V9L16 9Z" stroke="#444" fill="#bbb" strokeWidth="1.300" /></Svg></button>
        </nav>

        <PartNavigator />

        <div className="flex min-w-0 flex-1 flex-col bg-white">
          <div className="flex h-[20px] shrink-0 border-b border-[#2f5f77] text-[9px] text-[#222]" role="tablist">
            <button role="tab" aria-selected="true" className="flex w-[121px] items-center gap-[3px] bg-[#03648a] pl-1 whitespace-nowrap text-white"><PartIcon size={11} light />asm2_boom.prt<PageIcon /><LockIcon /><X size={8} strokeWidth={3} className="shrink-0" /></button>
            <button role="tab" aria-selected="false" className="flex w-[140px] items-center gap-[4px] pl-1 whitespace-nowrap"><PartIcon size={11} />des18_9_drill_divet.prt<LockIcon /></button>
            <button role="tab" aria-selected="false" className="flex w-[192px] items-center gap-[4px] pl-1 whitespace-nowrap"><PartIcon size={11} />des19_9_reflection_contours.prt<PageIcon /><LockIcon /></button>
            <button role="tab" aria-selected="false" className="flex items-center gap-[4px] pl-1 whitespace-nowrap"><PartIcon size={11} />drf1_ax6.prt<PageIcon /><LockIcon /></button>
          </div>
          <div className="relative flex-1 overflow-hidden bg-linear-to-b from-[#9cc0df] via-[#c6d7e2] via-50% to-[#e5e5e5] to-80%">
            <Boom />
            <Triad />
            <Brand />
            <FeatureGroupDialog />
          </div>
        </div>

        <nav aria-label="Quick tools" className="flex w-[23px] shrink-0 flex-col items-center gap-1 bg-white pt-[9px] pb-1">
          <Pad size={17}><path d="M12 12H23V23H12Z" fill="#fff" stroke="#333" strokeWidth="1.500" /><path d="M15 15H20V20H15Z" stroke="#333" /></Pad>
          <Svg size={17}><path d="M3 2H8V7H3ZM13 8H19V13H13ZM13 17H19V22H13ZM5.500 7V20H13M5.500 10.500H13" stroke="#555" strokeWidth="1.400" /></Svg>
          <Svg size={17}><circle cx="12" cy="12" r="10.500" stroke="#555" strokeWidth="1.400" /><path d="M8.500 9C8.500 5 15.500 5 15.500 9C15.500 12 12 11.500 12 15M12 18V18.500" stroke="#555" strokeWidth="1.500" /></Svg>
          <Pad size={17}><path d="M22 12 12 22" stroke="#555" strokeWidth="4" /><path d="M22 12 12 22" stroke="#eee" strokeWidth="2" /></Pad>
          <Cube size={17}><path d="M7 6 12 3.500 17 6V12L12 15 7 12Z" fill={OR} stroke="#a86420" /><path d="M7 6 12 8.500 17 6M12 8.500V15" stroke="#a86420" /></Cube>
          <StarIcon />
          <Svg size={17}><path d="M2 2H22V22H2Z" stroke="#777" /><path d="M1 1H5V5H1ZM19 1H23V5H19ZM1 19H5V23H1ZM19 19H23V23H19Z" fill="#777" /><path d="M5 18C5 12 9 6 17 5L20 9 13 19Z" fill="#c3cbcb" stroke="#555" /></Svg>
          <StarIcon />
          <Svg size={17}><path d="M1 12C6 4 18 4 23 12C18 20 6 20 1 12ZM3 21 21 3" stroke="#666" strokeWidth="1.500" /><circle cx="12" cy="12" r="4" stroke="#666" strokeWidth="1.500" /></Svg>
          <Cube size={17} />
          <svg width="4" height="6" viewBox="0 0 4 6" className="mt-auto mr-2" aria-hidden="true"><path d="M4 0V6L0 3Z" fill="#111" /></svg>
        </nav>
      </main>

      <footer className="relative flex h-[15px] shrink-0 items-center justify-center border-t border-[#ccc] bg-white text-[9px] leading-3 font-bold text-[#111]">
        <span className="absolute left-[2px]">Add/Remove features from Groups</span>
        <span className="ml-11">5 objects selected</span>
      </footer>
    </div>
  );
}
